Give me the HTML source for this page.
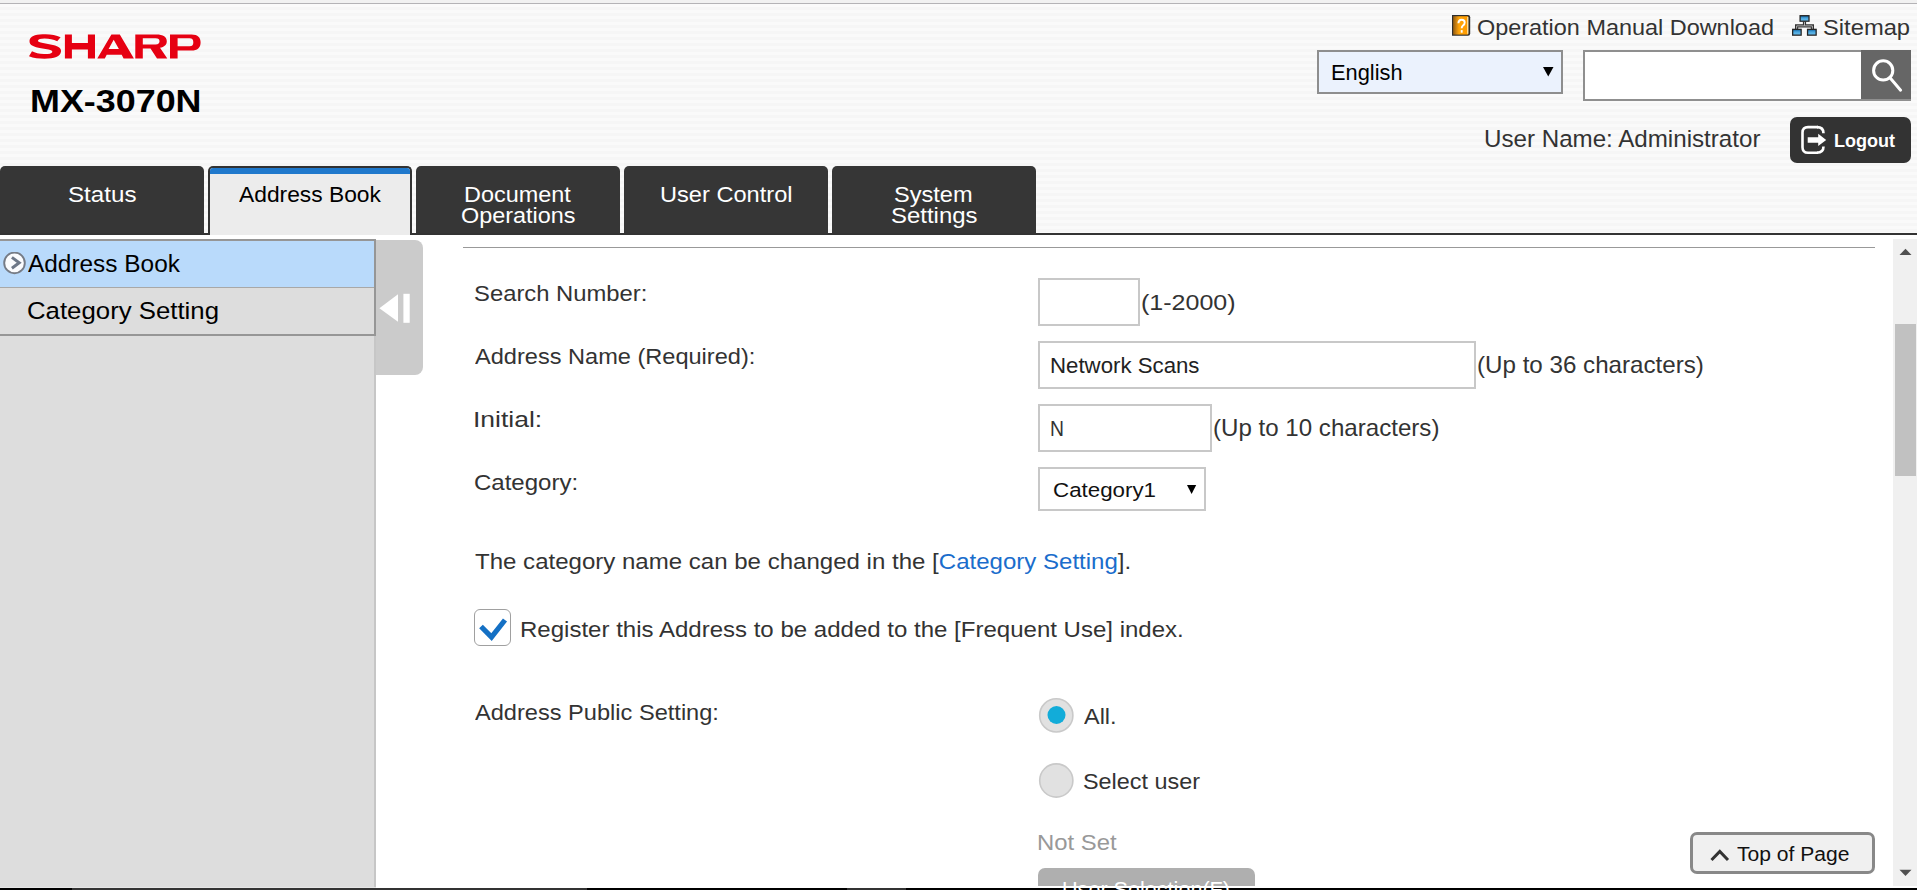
<!DOCTYPE html>
<html><head><meta charset="utf-8"><style>
*{margin:0;padding:0;box-sizing:border-box}
html,body{width:1917px;height:890px;overflow:hidden;background:#fff;font-family:"Liberation Sans",sans-serif}
.a{position:absolute}
.t{position:absolute;white-space:nowrap;line-height:1;transform-origin:0 0}
</style></head><body>
<!-- top strip -->
<div class="a" style="left:0;top:0;width:1917px;height:3px;background:#f1f1f1"></div>
<div class="a" style="left:0;top:3px;width:1917px;height:1px;background:#b4b3b6"></div>
<div class="a" style="left:0;top:4px;width:1917px;height:229px;background:repeating-linear-gradient(180deg,#fafafa 0 3px,#f6f6f6 3px 6px)"></div>
<svg style="position:absolute;left:29px;top:34px" width="174" height="26" viewBox="0 0 174 26">
<g fill="#e60012">
<path d="M31.6 3.2 C26 0.2 18 -0.3 10.5 0.5 C3.5 1.2 0.5 3.5 0.5 7.2 C0.5 11.5 5 12.8 12 14.2 L19.5 15.6 C22.5 16.2 23.6 17 23.2 18.2 C22.7 19.6 19.5 20.2 15 20.1 C10 20 6 18.9 3 17.3 L0 22.3 C4.5 24.1 10 24.8 15.5 24.8 C25.5 24.8 31.5 22.6 32 17.6 C32.4 13.6 29 11.8 21.5 10.4 L14 9 C10.3 8.3 8.8 7.6 9 6.5 C9.2 5.2 11.5 4.5 15.5 4.5 C20.5 4.5 24.3 5.4 28.2 7.3 Z"/>
<path d="M35.9 0.4 H42.9 V9 H58.9 V0.4 H66 V24.5 H58.9 V15.5 H42.9 V24.5 H35.9 Z"/>
<path d="M82.4 0.4 H90.8 L104.9 24.5 H94.6 L92.7 20.8 H77.7 L75.8 24.5 H68.3 Z M79.6 15.1 H89.9 L84.7 5.7 Z"/>
<path d="M106.3 0.4 H127 C134.5 0.4 137.8 3 137.8 7.2 C137.8 10.8 135.3 13 131 13.7 L138.3 24.5 H128 L121.5 14.4 H113.8 V24.5 H106.3 Z M113.8 4.3 V10.4 H126.5 C129.5 10.4 130.5 9.3 130.5 7.3 C130.5 5.4 129.5 4.3 126.5 4.3 Z"/>
<path d="M141 0.4 H162.5 C169 0.4 171.6 3.5 171.6 8.4 C171.6 13.5 168.5 16.5 162.5 16.5 H148.6 V24.5 H141 Z M148.6 4.3 V12.3 H160.5 C163.5 12.3 164.3 10.8 164.3 8.3 C164.3 5.8 163.3 4.3 160.5 4.3 Z"/>
</g></svg>
<!-- help icon -->
<svg class="a" style="left:1452px;top:15px" width="19" height="21" viewBox="0 0 19 21">
<defs><linearGradient id="og" x1="0" x2="1"><stop offset="0" stop-color="#8f5a12"/><stop offset="0.25" stop-color="#d98a10"/><stop offset="0.4" stop-color="#ffa508"/><stop offset="1" stop-color="#ff9a00"/></linearGradient>
<linearGradient id="bg1" x1="0" x2="0" y1="0" y2="1"><stop offset="0" stop-color="#0b5f9e"/><stop offset="0.45" stop-color="#4aa6de"/><stop offset="1" stop-color="#6cc0ef"/></linearGradient></defs>
<path d="M0 0 H16 Q18.2 0 18.2 2.2 V18.6 Q18.2 20.8 16 20.8 H0 Z" fill="#2e2e2e"/>
<rect x="1.1" y="1.2" width="15" height="18.4" fill="url(#og)"/>
<rect x="15.2" y="2" width="1.2" height="16.8" fill="#ffe9b0"/>
<path d="M6.4 8.3 Q6.4 4.8 9.6 4.8 Q12.7 4.8 12.7 7.4 Q12.7 9.2 11 10.6 Q9.7 11.7 9.7 13.2" stroke="#fff" stroke-width="1.9" fill="none"/>
<rect x="8.75" y="15.1" width="1.9" height="2.6" fill="#fff"/>
</svg>
<!-- sitemap icon -->
<svg class="a" style="left:1792px;top:15px" width="26" height="21" viewBox="0 0 26 21">
<path d="M12.5 6.5 V10.9 H4.6 V14 M12.5 10.9 H20.4 V14" stroke="#333" stroke-width="3.2" fill="none"/>
<path d="M12.5 6.5 V10.9 H4.6 V14 M12.5 10.9 H20.4 V14" stroke="#b0b0b0" stroke-width="1" fill="none"/>
<rect x="8.1" y="0.7" width="8.9" height="5.5" fill="url(#bg1)" stroke="#262626" stroke-width="1.3"/>
<rect x="0.65" y="14.35" width="8.5" height="5.8" fill="url(#bg1)" stroke="#262626" stroke-width="1.3"/>
<rect x="15.55" y="14.35" width="8.6" height="5.8" fill="url(#bg1)" stroke="#262626" stroke-width="1.3"/>
</svg>
<!-- language select -->
<div class="a" style="left:1317px;top:50px;width:246px;height:44px;background:#ebf2fd;border:2px solid #8e8e8e"></div>
<svg class="a" style="left:1543px;top:67px" width="11" height="10" viewBox="0 0 11 10"><path d="M0 0 H10.5 L5.25 9.6 Z" fill="#000"/></svg>
<!-- search -->
<div class="a" style="left:1583px;top:50px;width:328px;height:51px;background:#fff;border:2px solid #8f8f8f"></div>
<div class="a" style="left:1861px;top:50px;width:50px;height:49px;background:#666"></div>
<svg class="a" style="left:1861px;top:50px" width="50" height="50" viewBox="0 0 50 50">
<circle cx="22.2" cy="20.4" r="9.6" stroke="#fff" stroke-width="3" fill="none"/>
<path d="M28.8 27.6 L39.6 40.2" stroke="#fff" stroke-width="3" stroke-linecap="round"/>
</svg>
<!-- logout button -->
<div class="a" style="left:1790px;top:117px;width:121px;height:46px;background:#333;border-radius:7px"></div>
<svg class="a" style="left:1799px;top:125px" width="30" height="31" viewBox="0 0 30 31">
<path d="M19 2.1 H9 Q3.5 2.1 3.5 7.6 V22.2 Q3.5 27.7 9 27.7 H19" stroke="#fff" stroke-width="2.6" fill="none"/>
<path d="M18 2.1 Q24.5 2.1 24.5 8.2" stroke="#fff" stroke-width="2.6" fill="none"/>
<path d="M18 27.7 Q24.5 27.7 24.5 21.6" stroke="#fff" stroke-width="2.6" fill="none"/>
<path d="M8.7 12.3 H19.2 V8.8 L27.2 14.9 L19.2 21 V17.8 H8.7 Z" fill="#fff"/>
</svg>
<!-- tabs -->
<div class="a" style="left:0;top:166px;width:204px;height:68px;background:#363636;border-radius:5px 5px 0 0"></div>
<div class="a" style="left:208px;top:166px;width:204px;height:69px;background:#ececec;border:2px solid #333;border-bottom:none;border-radius:5px 5px 0 0;overflow:hidden"><div style="height:6px;background:#2079cc"></div></div>
<div class="a" style="left:416px;top:166px;width:204px;height:68px;background:#363636;border-radius:5px 5px 0 0"></div>
<div class="a" style="left:624px;top:166px;width:204px;height:68px;background:#363636;border-radius:5px 5px 0 0"></div>
<div class="a" style="left:832px;top:166px;width:204px;height:68px;background:#363636;border-radius:5px 5px 0 0"></div>
<div class="a" style="left:0;top:233px;width:208px;height:2px;background:#333"></div>
<div class="a" style="left:412px;top:233px;width:1505px;height:2px;background:#333"></div>
<!-- sidebar -->
<div class="a" style="left:0;top:235px;width:376px;height:655px;background:#ddd;border-right:2px solid #c6c6c6"></div>
<div class="a" style="left:0;top:235px;width:376px;height:4px;background:#fff"></div>
<div class="a" style="left:0;top:239px;width:376px;height:2px;background:#969696"></div>
<div class="a" style="left:0;top:241px;width:374px;height:46px;background:#b9dafb"></div>
<div class="a" style="left:0;top:287px;width:374px;height:1px;background:#a8a8a8"></div>
<div class="a" style="left:0;top:288px;width:374px;height:46px;background:#dddddd"></div>
<div class="a" style="left:0;top:334px;width:376px;height:2px;background:#969696"></div>
<div class="a" style="left:374px;top:239px;width:2px;height:97px;background:#969696"></div>
<svg class="a" style="left:3px;top:252px" width="24" height="23" viewBox="0 0 24 23">
<circle cx="11.5" cy="10.9" r="10.3" fill="#fbfcfe" stroke="#767c86" stroke-width="1.9"/>
<path d="M8.9 5.4 L16.2 10.8 L8.9 16.2" stroke="#6e7888" stroke-width="3" fill="none"/>
</svg>
<!-- collapse tab -->
<div class="a" style="left:376px;top:240px;width:47px;height:135px;background:#cbcbcb;border-radius:0 8px 8px 0"></div>
<svg class="a" style="left:379px;top:293px" width="32" height="31" viewBox="0 0 32 31">
<path d="M0.4 15.3 L19 1.3 V28.8 Z" fill="#fff"/>
<rect x="24.4" y="0.8" width="6.3" height="29" fill="#fff"/>
</svg>
<!-- content -->
<div class="a" style="left:463px;top:247px;width:1412px;height:1px;background:#999"></div>
<div class="a" style="left:1038px;top:278px;width:102px;height:48px;border:2px solid #c8c8c8;background:#fff"></div>
<div class="a" style="left:1038px;top:341px;width:438px;height:48px;border:2px solid #c8c8c8;background:#fff"></div>
<div class="a" style="left:1038px;top:404px;width:174px;height:48px;border:2px solid #c8c8c8;background:#fff"></div>
<div class="a" style="left:1038px;top:467px;width:168px;height:44px;border:2px solid #c8c8c8;background:#fff"></div>
<svg class="a" style="left:1187px;top:485px" width="10" height="10" viewBox="0 0 10 10"><path d="M0 0 H9.2 L4.6 9 Z" fill="#000"/></svg>
<!-- checkbox -->
<div class="a" style="left:474px;top:609px;width:37px;height:37px;border:1.5px solid #a0a0a0;border-radius:6px;background:#fff"></div>
<svg class="a" style="left:474px;top:609px" width="37" height="37" viewBox="0 0 37 37">
<path d="M7 17.5 L17.5 28 L31 11" stroke="#1470c4" stroke-width="5.2" fill="none"/>
</svg>
<!-- radios -->
<svg class="a" style="left:1038px;top:697px" width="37" height="104" viewBox="0 0 37 104">
<circle cx="18.3" cy="18.4" r="16.6" fill="#e1e1e1" stroke="#c9c9c9" stroke-width="1.6"/>
<circle cx="18.5" cy="18" r="9" fill="#12acd9"/>
<circle cx="18.3" cy="83.5" r="16.6" fill="#e1e1e1" stroke="#c9c9c9" stroke-width="1.6"/>
</svg>
<!-- user selection button -->
<div class="a" style="left:1038px;top:868px;width:217px;height:18px;background:#afafaf;border-radius:7px 7px 0 0;overflow:hidden"></div>
<!-- top of page -->
<div class="a" style="left:1690px;top:832px;width:185px;height:42px;background:#f0f0f0;border:3px solid #888;border-radius:7px"></div>
<svg class="a" style="left:1708px;top:846px" width="24" height="18" viewBox="0 0 24 18">
<path d="M3.5 14 L11.8 5.5 L20 14" stroke="#333" stroke-width="3" fill="none"/>
</svg>
<!-- scrollbar -->
<div class="a" style="left:1893px;top:239px;width:24px;height:647px;background:#f0f0f0"></div>
<div class="a" style="left:1895px;top:324px;width:21px;height:152px;background:#c1c1c1"></div>
<svg class="a" style="left:1899px;top:248px" width="14" height="8" viewBox="0 0 14 8"><path d="M0.5 7 H12.5 L6.5 0.8 Z" fill="#505050"/></svg>
<svg class="a" style="left:1899px;top:869px" width="14" height="8" viewBox="0 0 14 8"><path d="M0.5 0.8 H12.5 L6.5 7 Z" fill="#505050"/></svg>
<!-- bottom line -->
<div class="a" style="left:0;top:887px;width:376px;height:1px;background:#e6e6e6"></div>
<div class="a" style="left:0;top:888px;width:1917px;height:2px;background:#000"></div>
<div class="a" style="left:72px;top:888px;width:515px;height:2px;background:#333"></div>
<div class="a" style="left:847px;top:888px;width:59px;height:2px;background:#333"></div>
<div class="t" id="t_opman" style="left:1476.50px;top:16.01px;font-size:22.82px;color:#333;transform:scaleX(1.0270)">Operation Manual Download</div><div class="t" id="t_sitemap" style="left:1823.00px;top:16.01px;font-size:22.82px;color:#333;transform:scaleX(1.0399)">Sitemap</div><div class="t" id="t_english" style="left:1331.00px;top:63.00px;font-size:21.37px;color:#000;transform:scaleX(1.0210)">English</div><div class="t" id="t_user" style="left:1484.00px;top:128.00px;font-size:23.26px;color:#333;transform:scaleX(1.0386)">User Name: Administrator</div><div class="t" id="t_logout" style="left:1833.50px;top:131.00px;font-size:19.19px;font-weight:bold;color:#fff;transform:scaleX(0.9392)">Logout</div><div class="t" id="t_model" style="left:29.50px;top:86.01px;font-size:31.54px;font-weight:bold;color:#000;transform:scaleX(1.1381)">MX-3070N</div><div class="t" id="t_status" style="left:67.50px;top:183.01px;font-size:22.82px;color:#fff;transform:scaleX(1.0593)">Status</div><div class="t" id="t_tabab" style="left:239.00px;top:183.01px;font-size:22.82px;color:#000;transform:scaleX(0.9992)">Address Book</div><div class="t" id="t_doc" style="left:464.00px;top:184.00px;font-size:21.80px;color:#fff;transform:scaleX(1.0739)">Document</div><div class="t" id="t_ops" style="left:460.50px;top:205.00px;font-size:21.80px;color:#fff;transform:scaleX(1.0738)">Operations</div><div class="t" id="t_uc" style="left:659.50px;top:184.00px;font-size:21.80px;color:#fff;transform:scaleX(1.0831)">User Control</div><div class="t" id="t_sys" style="left:894.00px;top:184.00px;font-size:21.80px;color:#fff;transform:scaleX(1.0816)">System</div><div class="t" id="t_set" style="left:890.50px;top:205.00px;font-size:21.80px;color:#fff;transform:scaleX(1.0986)">Settings</div><div class="t" id="t_sab" style="left:28.00px;top:252.00px;font-size:24.49px;color:#000;transform:scaleX(0.9965)">Address Book</div><div class="t" id="t_scat" style="left:27.00px;top:300.01px;font-size:23.11px;color:#000;transform:scaleX(1.1155)">Category Setting</div><div class="t" id="t_l1" style="left:473.50px;top:282.01px;font-size:22.67px;color:#333;transform:scaleX(1.0512)">Search Number:</div><div class="t" id="t_l2" style="left:474.50px;top:346.00px;font-size:22.09px;color:#333;transform:scaleX(1.0675)">Address Name (Required):</div><div class="t" id="t_l3" style="left:473.00px;top:409.00px;font-size:21.80px;color:#333;transform:scaleX(1.2155)">Initial:</div><div class="t" id="t_l4" style="left:474.00px;top:473.01px;font-size:21.51px;color:#333;transform:scaleX(1.1168)">Category:</div><div class="t" id="t_range" style="left:1140.50px;top:292.01px;font-size:22.24px;color:#333;transform:scaleX(1.1251)">(1-2000)</div><div class="t" id="t_netscan" style="left:1050.00px;top:355.00px;font-size:21.80px;color:#222;transform:scaleX(1.0198)">Network Scans</div><div class="t" id="t_up36" style="left:1477.00px;top:354.00px;font-size:23.40px;color:#333;transform:scaleX(1.0328)">(Up to 36 characters)</div><div class="t" id="t_n" style="left:1050.00px;top:418.01px;font-size:21.95px;color:#333;transform:scaleX(0.8820)">N</div><div class="t" id="t_up10" style="left:1212.50px;top:417.00px;font-size:23.40px;color:#333;transform:scaleX(1.0306)">(Up to 10 characters)</div><div class="t" id="t_cat1" style="left:1053.00px;top:479.01px;font-size:21.08px;color:#111;transform:scaleX(1.0596)">Category1</div><div class="t" id="t_catline" style="left:475.00px;top:551.01px;font-size:21.95px;color:#333;transform:scaleX(1.0959)">The category name can be changed in the [<span style="color:#1a6dcc">Category Setting</span>].</div><div class="t" id="t_reg" style="left:519.50px;top:618.01px;font-size:22.82px;color:#333;transform:scaleX(1.0532)">Register this Address to be added to the [Frequent Use] index.</div><div class="t" id="t_aps" style="left:474.50px;top:701.01px;font-size:22.82px;color:#333;transform:scaleX(1.0342)">Address Public Setting:</div><div class="t" id="t_all" style="left:1083.50px;top:706.00px;font-size:22.53px;color:#333;transform:scaleX(1.0407)">All.</div><div class="t" id="t_sel" style="left:1082.50px;top:771.00px;font-size:21.80px;color:#333;transform:scaleX(1.0731)">Select user</div><div class="t" id="t_notset" style="left:1037.00px;top:833.00px;font-size:21.37px;color:#999;transform:scaleX(1.1167)">Not Set</div><div class="t" id="t_top" style="left:1737.00px;top:844.00px;font-size:20.79px;color:#111;transform:scaleX(1.0143)">Top of Page</div><div class="t" id="t_usel" style="left:1062.00px;top:879.00px;font-size:21.80px;color:#fff;transform:scaleX(0.9906)">User Selection(F)</div>
</body></html>
